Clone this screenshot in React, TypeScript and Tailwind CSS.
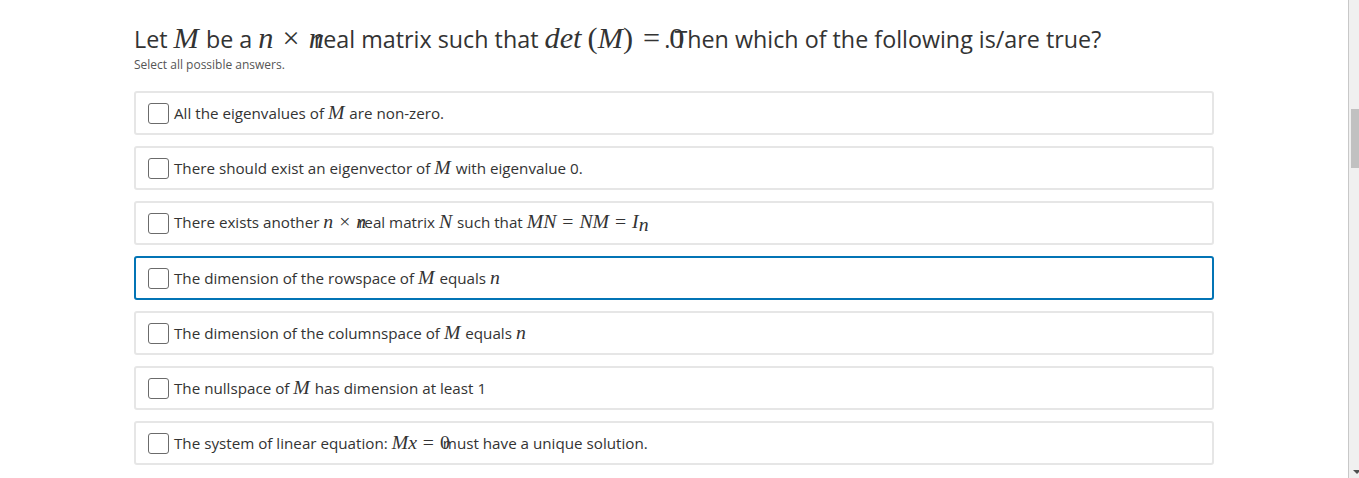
import React from 'react';

const M = ({ children, className = '' }: { children: React.ReactNode; className?: string }) => (
  <span className={`font-['Liberation_Serif',serif] italic text-[1.3em] leading-none ${className}`}>{children}</span>
);

const R = ({ children, className = '' }: { children: React.ReactNode; className?: string }) => (
  <span className={`font-['Liberation_Serif',serif] text-[1.3em] leading-none ${className}`}>{children}</span>
);

const options: { id: number; body: React.ReactNode; focused?: boolean }[] = [
  {
    id: 1,
    body: (
      <>
        All the eigenvalues of <M className="mr-[1px]">M</M> are non-zero.
      </>
    ),
  },
  {
    id: 2,
    body: (
      <>
        There should exist an eigenvector of <M className="mr-[1px]">M</M> with eigenvalue 0.
      </>
    ),
  },
  {
    id: 3,
    body: (
      <>
        There exists another <M>n</M> <R className="mx-[2px]">×</R> <M className="-mr-[8px]">n</M>real matrix <M className="mr-[1px]">N</M> such that{' '}
        <M>MN</M> <R className="mx-[2px]">=</R> <M>NM</M> <R className="mx-[2px]">=</R> <M>I</M>
        <M className="text-[0.9em] align-[-3px]">n</M>
      </>
    ),
  },
  {
    id: 4,
    focused: true,
    body: (
      <>
        The dimension of the rowspace of <M className="mr-[1px]">M</M> equals <M>n</M>
      </>
    ),
  },
  {
    id: 5,
    body: (
      <>
        The dimension of the columnspace of <M className="mr-[1px]">M</M> equals <M>n</M>
      </>
    ),
  },
  {
    id: 6,
    body: (
      <>
        The nullspace of <M className="mr-[1px]">M</M> has dimension at least 1
      </>
    ),
  },
  {
    id: 7,
    body: (
      <>
        The system of linear equation: <M>Mx</M> <R className="mx-[2px]">=</R> <R className="-mr-[7px]">0</R>must have a unique solution.
      </>
    ),
  },
];

export default function App() {
  return (
    <div className="relative w-[1359px] h-[478px] overflow-hidden bg-white font-['Open_Sans',sans-serif] text-[#333]">
      <div className="w-[1348px]">
        <div className="w-[1080px] mx-auto pt-[22px]">
          <h1 className="text-[23.3px] leading-[34px] text-[#333]">
            Let <M className="mr-[1px]">M</M> be a <M>n</M> <R className="mx-[3px]">×</R> <M className="-mr-[10px]">n</M>real matrix such that{' '}
            <M>det</M> <R>(</R>
            <M>M</M>
            <R>)</R> <R className="mx-[4px]">=</R>.<R className="-ml-[1px] -mr-[10px]">0</R>Then which of the following is/are true?
          </h1>
          <p className="text-[12px] leading-[16px] text-[#555] mt-[1px]">Select all possible answers.</p>

          <div className="mt-[18px] flex flex-col gap-[11px]">
            {options.map((o) => (
              <label
                key={o.id}
                className={`h-[44px] flex items-center gap-[5px] pl-[12px] rounded-[3px] border-2 ${
                  o.focused ? 'border-[#0374b5]' : 'border-[#e6e6e6]'
                }`}
              >
                <span className="w-[21px] h-[21px] shrink-0 rounded-[3px] border border-[#6b6b6b] bg-white" />
                <span className="text-[15.2px] text-[#333] whitespace-nowrap">{o.body}</span>
              </label>
            ))}
          </div>
        </div>
      </div>

      {/* page scrollbar */}
      <div className="absolute top-0 right-0 w-[11px] h-full bg-[#f0f0f0] border-l border-[#c8c8c8]">
        <div className="absolute top-[109px] left-[2px] right-0 h-[59px] bg-[#c1c1c1]" />
        <div className="absolute bottom-[4px] left-[4px] w-0 h-0 border-l-[4px] border-r-[4px] border-t-[4px] border-l-transparent border-r-transparent border-t-[#505050]" />
      </div>
    </div>
  );
}
